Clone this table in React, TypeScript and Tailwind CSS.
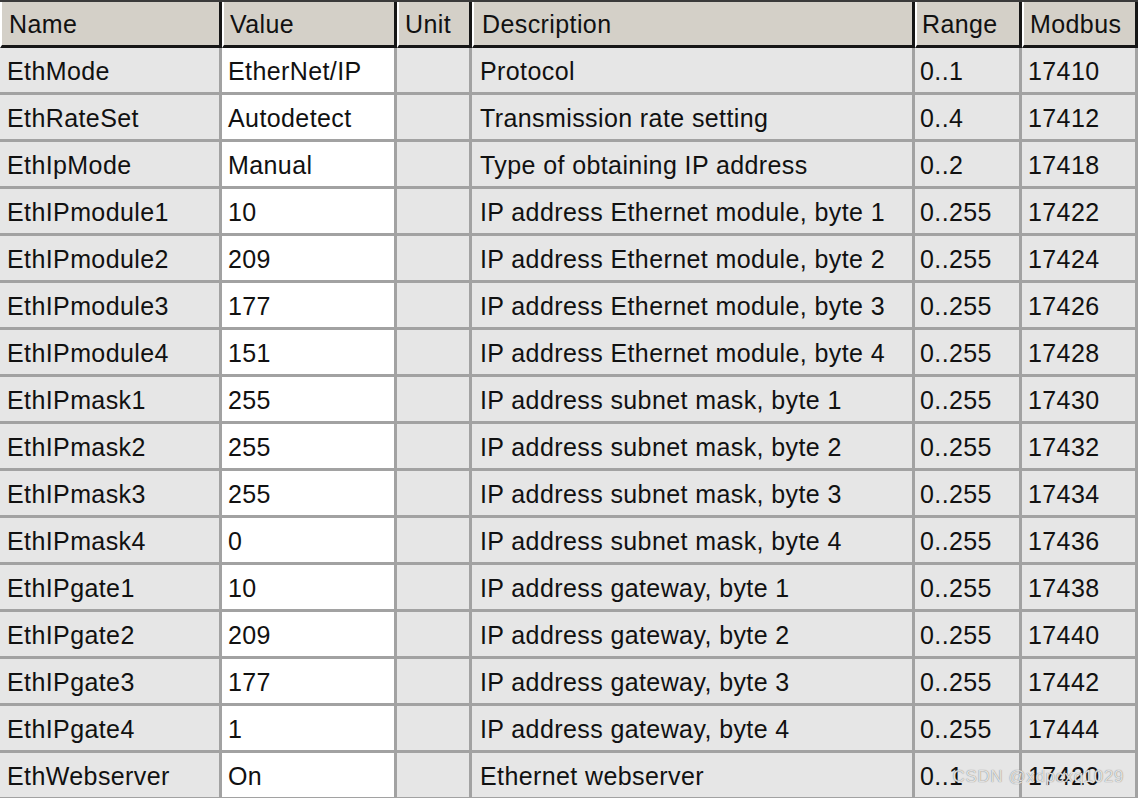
const cols = 'grid grid-cols-[222px_175px_75px_443px_107px_116px]'

const headers = ['Name', 'Value', 'Unit', 'Description', 'Range', 'Modbus']

const rows: string[][] = [
  ['EthMode', 'EtherNet/IP', '', 'Protocol', '0..1', '17410'],
  ['EthRateSet', 'Autodetect', '', 'Transmission rate setting', '0..4', '17412'],
  ['EthIpMode', 'Manual', '', 'Type of obtaining IP address', '0..2', '17418'],
  ['EthIPmodule1', '10', '', 'IP address Ethernet module, byte 1', '0..255', '17422'],
  ['EthIPmodule2', '209', '', 'IP address Ethernet module, byte 2', '0..255', '17424'],
  ['EthIPmodule3', '177', '', 'IP address Ethernet module, byte 3', '0..255', '17426'],
  ['EthIPmodule4', '151', '', 'IP address Ethernet module, byte 4', '0..255', '17428'],
  ['EthIPmask1', '255', '', 'IP address subnet mask, byte 1', '0..255', '17430'],
  ['EthIPmask2', '255', '', 'IP address subnet mask, byte 2', '0..255', '17432'],
  ['EthIPmask3', '255', '', 'IP address subnet mask, byte 3', '0..255', '17434'],
  ['EthIPmask4', '0', '', 'IP address subnet mask, byte 4', '0..255', '17436'],
  ['EthIPgate1', '10', '', 'IP address gateway, byte 1', '0..255', '17438'],
  ['EthIPgate2', '209', '', 'IP address gateway, byte 2', '0..255', '17440'],
  ['EthIPgate3', '177', '', 'IP address gateway, byte 3', '0..255', '17442'],
  ['EthIPgate4', '1', '', 'IP address gateway, byte 4', '0..255', '17444'],
  ['EthWebserver', 'On', '', 'Ethernet webserver', '0..1', '17420'],
]

// left padding per column, measured from the grid lines
const pads = ['pl-[7px]', 'pl-[6px]', 'pl-[6px]', 'pl-[8px]', 'pl-[5px]', 'pl-[6px]']

export default function App() {
  return (
    <div
      className="relative w-[1138px] h-[798px] overflow-hidden bg-[#e6e6e6] text-[25px] tracking-[0.4px] text-[#111]"
      style={{ fontFamily: "'Liberation Sans', Arial, sans-serif" }}
    >
      {/* Header */}
      <div className={`${cols} h-[48px] border-t-2 border-[#3a3a3a]`}>
        {headers.map((h, i) => (
          <div
            key={h}
            className={`flex items-center pt-[3px] bg-[#d4d0c8] border-l-2 border-l-white border-r-[3px] border-r-[#161616] border-b-[3px] border-b-[#161616] ${pads[i]}`}
          >
            {h}
          </div>
        ))}
      </div>

      {/* Rows */}
      {rows.map((r) => (
        <div key={r[0]} className={`${cols} h-[47px]`}>
          {r.map((c, i) => (
            <div
              key={i}
              className={`flex items-center pt-[4px] whitespace-nowrap border-r-[3px] border-b-[3px] border-[#a2a2a2] ${
                i === 1 ? 'bg-white' : 'bg-[#e6e6e6]'
              } ${pads[i]}`}
            >
              {c}
            </div>
          ))}
        </div>
      ))}

      {/* Watermark */}
      <div className="absolute right-[14px] bottom-[9px] text-[17px] tracking-[0.6px] text-[#f4f4f4]/85 [text-shadow:0_0_1px_#666]">
        CSDN @xdpcxq1029
      </div>
    </div>
  )
}
